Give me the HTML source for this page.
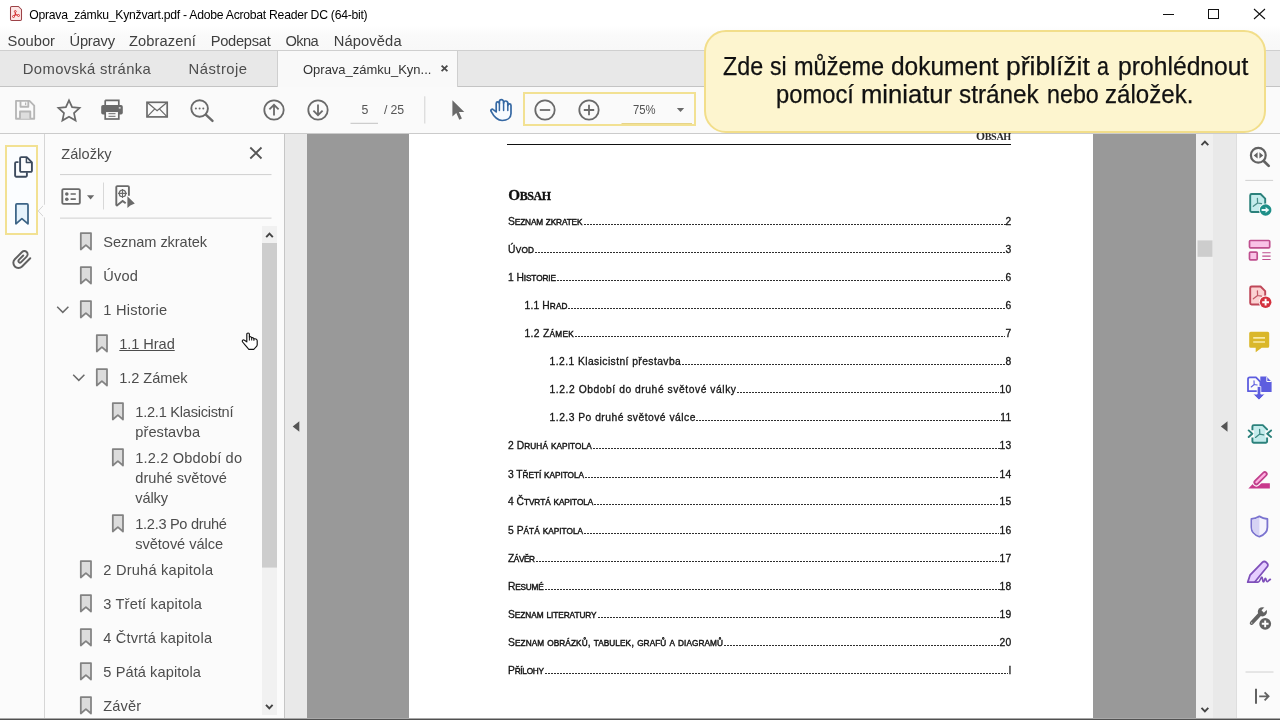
<!DOCTYPE html>
<html lang="cs">
<head>
<meta charset="utf-8">
<title>Oprava_zámku_Kynžvart.pdf - Adobe Acrobat Reader DC (64-bit)</title>
<style>
*{box-sizing:border-box;margin:0;padding:0}
html,body{width:1280px;height:720px;overflow:hidden;background:#fff}
body{font-family:"Liberation Sans",sans-serif;position:relative;color:#000}
#wrap{position:absolute;left:0;top:0;width:1280px;height:720px;will-change:transform}
.a{position:absolute}
.t{position:absolute;white-space:pre;line-height:1}
svg{position:absolute;overflow:visible}
#title{left:0;top:0;width:1280px;height:30px;background:#fff}
#menu{left:0;top:26px;width:1280px;height:24px;background:linear-gradient(#fff 0,#fafafa 40%,#f8f8f8 100%)}
#tabs{left:0;top:50px;width:1280px;height:37px;background:#e8e8e8;border-top:1px solid #cfcfcf;border-bottom:1px solid #c4c4c4}
#atab{left:277px;top:51px;width:181px;height:36px;background:#f9f9f9;border-left:1px solid #cfcfcf;border-right:1px solid #cfcfcf}
#tool{left:0;top:87px;width:1280px;height:47px;background:#fafafa;border-bottom:1px solid #cbcbcb}
#nav{left:0;top:134px;width:45px;height:586px;background:#fbfbfb;border-right:1px solid #d6d6d6}
#bm{left:45px;top:134px;width:239px;height:586px;background:#fbfbfb}
#split{left:284px;top:134px;width:23px;height:586px;background:#e9e9e9;border-left:1px solid #c6c6c6}
#doc{left:307px;top:134px;width:889px;height:586px;background:#999}
#page{left:409px;top:134px;width:684px;height:586px;background:#fff}
#vsb{left:1196px;top:134px;width:17px;height:586px;background:#f0f0f0}
#rsplit{left:1213px;top:134px;width:24px;height:586px;background:#e9e9e9}
#rtool{left:1236px;top:134px;width:44px;height:586px;background:#fbfbfb;border-left:1px solid #dedede}
#bottom{left:0;top:718px;width:1280px;height:2px;background:linear-gradient(#a8a8a8 0,#a8a8a8 50%,#505050 50%)}
#call{z-index:5;left:704px;top:30px;width:562px;height:103px;background:#fdf5cf;border:2px solid #f2de8a;border-radius:22px}
.hl{border:2px solid #f2e193}
.dots{position:absolute;height:1.3px;background-image:linear-gradient(to right,#2e2e2e 0,#2e2e2e 1.6px,transparent 1.6px);background-size:3px 1.3px;background-repeat:repeat-x}
</style>
</head>
<body>
<div id="wrap">
<div id="title" class="a"></div>
<div id="menu" class="a"></div>
<div id="tabs" class="a"></div>
<div id="atab" class="a"></div>
<div id="tool" class="a"></div>
<div id="nav" class="a"></div>
<div id="bm" class="a"></div>
<div id="split" class="a"></div>
<div id="doc" class="a"></div>
<div id="page" class="a"></div>
<div id="vsb" class="a"></div>
<div id="rsplit" class="a"></div>
<div id="rtool" class="a"></div>
<svg style="left:0;top:0" width="40" height="30" viewBox="0 0 40 30"><path d="M11.700 6.500h6.800l3 3v9.800a1.200 1.200 0 0 1-1.200 1.200H11.700a1.200 1.200 0 0 1-1.200-1.200V7.700a1.200 1.200 0 0 1 1.200-1.200z" fill="#fde6e6" stroke="#9c4247" stroke-width="1.050" stroke-linejoin="round"/><g fill="#fde6e6" stroke="#d63030" stroke-width=".95"><path d="M15.300 12.400l.2 2.200-1.500 1.400M15.500 14.600l2.200 .6" fill="none" stroke-width="1.300"/><circle cx="15.300" cy="11.500" r=".95"/><circle cx="13.500" cy="16.500" r="1"/><circle cx="18.500" cy="15.500" r="1"/></g></svg>
<span class="t" style="left:29.30px;top:9.27px;font-size:12.2px;color:#000;letter-spacing:-0.259px;">Oprava_zámku_Kynžvart.pdf - Adobe Acrobat Reader DC (64-bit)</span>
<div class="a" style="left:1163px;top:14px;width:11px;height:1px;background:#111"></div>
<div class="a" style="left:1208px;top:9px;width:11px;height:10px;border:1px solid #111"></div>
<svg style="left:1254px;top:9px" width="11" height="10" viewBox="0 0 11 10"><path d="M0 0L11 10M11 0L0 10" stroke="#111" stroke-width="1.1"/></svg>
<span class="t" style="left:7.60px;top:33.96px;font-size:14.7px;color:#3f3f3f;">Soubor</span>
<span class="t" style="left:69.50px;top:33.96px;font-size:14.7px;color:#3f3f3f;letter-spacing:-0.206px;">Úpravy</span>
<span class="t" style="left:129.00px;top:33.96px;font-size:14.7px;color:#3f3f3f;letter-spacing:0.082px;">Zobrazení</span>
<span class="t" style="left:210.70px;top:33.96px;font-size:14.7px;color:#3f3f3f;letter-spacing:-0.283px;">Podepsat</span>
<span class="t" style="left:285.40px;top:33.96px;font-size:14.7px;color:#3f3f3f;letter-spacing:-0.636px;">Okna</span>
<span class="t" style="left:333.70px;top:33.96px;font-size:14.7px;color:#3f3f3f;letter-spacing:0.133px;">Nápověda</span>
<span class="t" style="left:22.80px;top:61.77px;font-size:14.8px;color:#4d4d4d;letter-spacing:0.365px;">Domovská stránka</span>
<span class="t" style="left:188.60px;top:61.77px;font-size:14.8px;color:#4d4d4d;letter-spacing:0.470px;">Nástroje</span>
<span class="t" style="left:303.20px;top:63.29px;font-size:13.6px;color:#333;transform:scaleX(0.9546);transform-origin:0 0;">Oprava_zámku_Kyn...</span>
<svg style="left:441px;top:65.200px" width="7" height="7" viewBox="0 0 7 7"><path d="M.6 .6L6.400 6.200M6.400 .6L.6 6.200" stroke="#4a4a4a" stroke-width="1.800"/></svg>
<svg style="left:0;top:0" width="1280" height="720" viewBox="0 0 1280 720"><g fill="none" stroke="#b6b6b6" stroke-width="1.850" stroke-linejoin="round"><path d="M16 100.900h13.500l4.700 4.700v13.200h-18.200z"/><path d="M20.500 100.900v5.800h7.800v-5.800" /><path d="M20 118.800v-7.300h10.300v7.300" fill="#dedede"/><path d="M25.600 102.500v2.600" stroke-width="1.300"/></g><path d="M69 100.300l3.100 6.900 7.500 .8-5.600 5.100 1.600 7.400-6.600-3.800-6.600 3.800 1.600-7.400-5.600-5.100 7.500-.8z" fill="none" stroke="#6a6a6a" stroke-width="1.700" stroke-linejoin="miter"/><g><path d="M105.200 100.300h13.600v5" fill="none" stroke="#6a6a6a" stroke-width="1.700"/><path d="M105.200 105.500v-5.200" stroke="#6a6a6a" stroke-width="1.700"/><rect x="101.200" y="105" width="21.600" height="9.600" rx="1.800" fill="#6a6a6a"/><rect x="105.200" y="111.200" width="13.600" height="7.800" fill="#fafafa" stroke="#6a6a6a" stroke-width="1.700"/><path d="M108.500 113.700h7M108.500 116.300h7" stroke="#6a6a6a" stroke-width="1"/><rect x="118.800" y="107.300" width="1.800" height="1.200" fill="#fafafa"/></g><g fill="none" stroke="#6a6a6a" stroke-width="1.700"><rect x="147" y="102.300" width="20.200" height="14.600"/><path d="M147 102.300l10.100 8.400 10.100-8.400" stroke-width="1.300"/><path d="M147 116.900l7.800-8.100M167.200 116.900l-7.800-8.100" stroke-width="1.200"/></g><g><circle cx="199.600" cy="108.500" r="8.300" fill="none" stroke="#6a6a6a" stroke-width="1.900"/><path d="M205.800 114.600l6.700 6.300" stroke="#6a6a6a" stroke-width="2.400" stroke-linecap="round"/><circle cx="195.900" cy="108.500" r="1" fill="#6a6a6a"/><circle cx="199.600" cy="108.500" r="1" fill="#6a6a6a"/><circle cx="203.300" cy="108.500" r="1" fill="#6a6a6a"/></g><g fill="none" stroke="#6a6a6a" stroke-width="1.800"><circle cx="274" cy="110" r="9.700"/><path d="M274 115.600v-10.600M269.400 109.400l4.600-4.600 4.600 4.600"/></g><g fill="none" stroke="#6a6a6a" stroke-width="1.800"><circle cx="318" cy="110" r="9.700"/><path d="M318 104.400v10.600M313.400 110.600l4.600 4.600 4.600-4.600"/></g><path d="M350.500 123.300h27.500" stroke="#c2c2c2" stroke-width="1"/><path d="M424.800 96.300v27.200" stroke="#d2d2d2" stroke-width="1"/><path d="M452.400 100.200v16.400l3.900-3.500 3 6.600 2.600-1.200-3-6.500h5.400z" fill="#6a6a6a"/><g fill="#f7fbff" stroke="#3568a3" stroke-width="1.700" stroke-linejoin="round" stroke-linecap="round"><path d="M496.200 111.900V103.500a1.600 1.600 0 0 1 3.200 0V101.800a2.100 2.100 0 0 1 4.200 0V103.100a2.100 2.100 0 0 1 4.200 0V105.500a1.600 1.600 0 0 1 3.200 0V113.500c0 4.500-3.800 7-8.800 7C497 120.500 494 117 491 111.200a1.400 1.400 0 0 1 2.200-1.600z"/><path d="M499.400 103.500V110.500M503.600 101.800V110.500M507.800 103.100V110.500" fill="none" stroke-width="1.500"/></g><g fill="none" stroke="#6a6a6a" stroke-width="1.800"><circle cx="545" cy="110" r="9.700"/><path d="M539.800 110h10.400"/><circle cx="589" cy="110" r="9.700"/><path d="M583.800 110h10.400M589 104.800v10.400"/></g><path d="M621.500 123.500h70.500" stroke="#e6d48a" stroke-width="1"/><path d="M676.800 107.900h7.400l-3.700 4z" fill="#6a6a6a"/></svg>
<div class="a hl" style="left:523px;top:92px;width:173px;height:34px"></div>
<span class="t" style="left:361.50px;top:104.39px;font-size:12.3px;color:#555;">5</span>
<span class="t" style="left:384.00px;top:104.39px;font-size:12.3px;color:#555;letter-spacing:-0.172px;">/ 25</span>
<span class="t" style="left:633.00px;top:104.39px;font-size:12.3px;color:#555;transform:scaleX(0.9178);transform-origin:0 0;">75%</span>
<div id="call" class="a"></div>
<span class="t" style="left:722.60px;top:53.88px;font-size:25.3px;color:#111;z-index:6;-webkit-text-stroke:.25px #111;transform:scaleX(0.9199);transform-origin:0 0;">Zde</span>
<span class="t" style="left:769.50px;top:53.88px;font-size:25.3px;color:#111;z-index:6;-webkit-text-stroke:.25px #111;transform:scaleX(0.9080);transform-origin:0 0;">si</span>
<span class="t" style="left:793.50px;top:53.88px;font-size:25.3px;color:#111;z-index:6;-webkit-text-stroke:.25px #111;transform:scaleX(0.9297);transform-origin:0 0;">můžeme</span>
<span class="t" style="left:891.10px;top:53.88px;font-size:25.3px;color:#111;z-index:6;-webkit-text-stroke:.25px #111;transform:scaleX(0.9684);transform-origin:0 0;">dokument</span>
<span class="t" style="left:1006.10px;top:53.88px;font-size:25.3px;color:#111;z-index:6;-webkit-text-stroke:.25px #111;transform:scaleX(1.0457);transform-origin:0 0;">přiblížit</span>
<span class="t" style="left:1097.30px;top:53.88px;font-size:25.3px;color:#111;z-index:6;-webkit-text-stroke:.25px #111;transform:scaleX(0.8453);transform-origin:0 0;">a</span>
<span class="t" style="left:1117.60px;top:53.88px;font-size:25.3px;color:#111;z-index:6;-webkit-text-stroke:.25px #111;transform:scaleX(0.9759);transform-origin:0 0;">prohlédnout</span>
<span class="t" style="left:775.70px;top:81.98px;font-size:25.3px;color:#111;z-index:6;-webkit-text-stroke:.25px #111;transform:scaleX(0.9389);transform-origin:0 0;">pomocí</span>
<span class="t" style="left:860.70px;top:81.98px;font-size:25.3px;color:#111;z-index:6;-webkit-text-stroke:.25px #111;transform:scaleX(1.0124);transform-origin:0 0;">miniatur</span>
<span class="t" style="left:959.20px;top:81.98px;font-size:25.3px;color:#111;z-index:6;-webkit-text-stroke:.25px #111;transform:scaleX(0.9618);transform-origin:0 0;">stránek</span>
<span class="t" style="left:1046.50px;top:81.98px;font-size:25.3px;color:#111;z-index:6;-webkit-text-stroke:.25px #111;transform:scaleX(0.9204);transform-origin:0 0;">nebo</span>
<span class="t" style="left:1105.20px;top:81.98px;font-size:25.3px;color:#111;z-index:6;-webkit-text-stroke:.25px #111;transform:scaleX(0.9525);transform-origin:0 0;">záložek.</span>
<div id="bottom" class="a"></div>
<div class="a hl" style="left:5px;top:145px;width:33px;height:90px;background:#fbfdff"></div>
<svg style="left:0;top:0" width="1280" height="720" viewBox="0 0 1280 720"><path d="M45.500 204v14l-1 0z" fill="#fbfbfb"/><path d="M44.500 204.300l-6.300 6.700 6.300 6.700" fill="#fbfbfb" stroke="#d6d6d6" stroke-width="1"/><path d="M44 204.800v12.400" stroke="#fbfbfb" stroke-width="2"/><g fill="none" stroke="#3d4b5e" stroke-width="1.900" stroke-linejoin="round"><path d="M17.800 162.100H16.300a1.200 1.200 0 0 0-1.200 1.200V175.500a1.200 1.200 0 0 0 1.200 1.200H25.700a1.200 1.200 0 0 0 1.200-1.200V173" stroke-linecap="round"/><path d="M21.300 157.100H26.700L31.900 162.300V170.700a1.200 1.200 0 0 1-1.200 1.200H21.300a1.200 1.200 0 0 1-1.200-1.200V158.300a1.200 1.200 0 0 1 1.200-1.200z" fill="#fdfdfd"/><path d="M26.400 157.500V162.600H31.600" stroke-width="1.500"/></g><path d="M16.900 203.900h10.100a1 1 0 0 1 1 1v18.900l-6.100-5.200-6 5.200v-18.900a1 1 0 0 1 1-1z" fill="#e6f3fc" stroke="#3c6486" stroke-width="1.750" stroke-linejoin="round"/><path transform="translate(21.900 259.800) rotate(-45)" d="M7 4.800H-4.600A5.100 5.100 0 0 1-4.600-5.400H5.600A3.250 3.250 0 0 1 5.600 1.100H-2.200A1.600 1.600 0 0 1-2.200-2.100H4" fill="none" stroke="#606060" stroke-width="1.950" stroke-linecap="round"/></svg>
<span class="t" style="left:61.30px;top:147.24px;font-size:14.6px;color:#4d4d4d;">Záložky</span>
<span class="t" style="left:103.30px;top:235.44px;font-size:14.6px;color:#4d4d4d;letter-spacing:-0.072px;">Seznam zkratek</span>
<span class="t" style="left:103.30px;top:269.44px;font-size:14.6px;color:#4d4d4d;letter-spacing:0.207px;">Úvod</span>
<span class="t" style="left:103.30px;top:303.44px;font-size:14.6px;color:#4d4d4d;letter-spacing:0.229px;">1 Historie</span>
<span class="t" style="left:119.30px;top:337.44px;font-size:14.6px;color:#4d4d4d;letter-spacing:-0.069px;text-decoration:underline;text-underline-offset:1px;">1.1 Hrad</span>
<span class="t" style="left:119.30px;top:371.44px;font-size:14.6px;color:#4d4d4d;letter-spacing:-0.082px;">1.2 Zámek</span>
<span class="t" style="left:135.30px;top:405.44px;font-size:14.6px;color:#4d4d4d;letter-spacing:-0.251px;">1.2.1 Klasicistní</span>
<span class="t" style="left:135.30px;top:425.44px;font-size:14.6px;color:#4d4d4d;letter-spacing:0.076px;">přestavba</span>
<span class="t" style="left:135.30px;top:451.44px;font-size:14.6px;color:#4d4d4d;letter-spacing:0.145px;">1.2.2 Období do</span>
<span class="t" style="left:135.30px;top:471.44px;font-size:14.6px;color:#4d4d4d;">druhé světové</span>
<span class="t" style="left:135.30px;top:491.44px;font-size:14.6px;color:#4d4d4d;letter-spacing:-0.138px;">války</span>
<span class="t" style="left:135.30px;top:517.44px;font-size:14.6px;color:#4d4d4d;letter-spacing:-0.312px;">1.2.3 Po druhé</span>
<span class="t" style="left:135.30px;top:537.44px;font-size:14.6px;color:#4d4d4d;letter-spacing:-0.060px;">světové válce</span>
<span class="t" style="left:103.30px;top:563.44px;font-size:14.6px;color:#4d4d4d;letter-spacing:0.228px;">2 Druhá kapitola</span>
<span class="t" style="left:103.30px;top:597.44px;font-size:14.6px;color:#4d4d4d;letter-spacing:0.162px;">3 Třetí kapitola</span>
<span class="t" style="left:103.30px;top:631.44px;font-size:14.6px;color:#4d4d4d;letter-spacing:0.203px;">4 Čtvrtá kapitola</span>
<span class="t" style="left:103.30px;top:665.44px;font-size:14.6px;color:#4d4d4d;letter-spacing:0.081px;">5 Pátá kapitola</span>
<span class="t" style="left:103.30px;top:699.44px;font-size:14.6px;color:#4d4d4d;letter-spacing:0.097px;">Závěr</span>
<svg style="left:0;top:0" width="1280" height="720" viewBox="0 0 1280 720"><path d="M250.300 147.500l11.200 11M261.500 147.500l-11.200 11" stroke="#555" stroke-width="1.800"/><path d="M60 174.600h211.500M60 218.100h211.500" stroke="#cfcfcf" stroke-width="1"/><g><rect x="62.300" y="189.100" width="17.500" height="14.800" rx="1.200" fill="none" stroke="#6a6a6a" stroke-width="1.900"/><circle cx="66.800" cy="194" r="1.800" fill="#6a6a6a"/><circle cx="66.800" cy="199.200" r="1.800" fill="#6a6a6a"/><path d="M70.600 194h5.200M70.600 199.200h5.200" stroke="#6a6a6a" stroke-width="1.700"/><path d="M87 195.200h7.200l-3.600 4.200z" fill="#6a6a6a"/></g><path d="M103.500 182.500v27" stroke="#d8d8d8" stroke-width="1"/><g><path d="M116.300 205.600V187.100a1 1 0 0 1 1-1H127.900a1 1 0 0 1 1 1V195.800" fill="none" stroke="#6a6a6a" stroke-width="1.900"/><path d="M116.300 205.900l6.300-5 3.100 2.400" fill="none" stroke="#6a6a6a" stroke-width="1.900" stroke-linejoin="miter"/><circle cx="122.500" cy="193.400" r="3.200" fill="none" stroke="#6a6a6a" stroke-width="1.300"/><path d="M122.500 188.900v9M118 193.400h9" stroke="#6a6a6a" stroke-width="1.100"/><path d="M127.400 196.300v11.700l2.900-2.600 4.500-1.900z" fill="#6a6a6a"/></g><rect x="262" y="226" width="15" height="489" fill="#f1f1f1"/><rect x="262" y="243" width="15" height="324.600" fill="#cdcdcd"/><path d="M266.200 237.200l3.300-3.600 3.300 3.600" fill="none" stroke="#444" stroke-width="1.900"/><path d="M266 704.800l3.300 3.600 3.300-3.600" fill="none" stroke="#444" stroke-width="1.900"/><path d="M80.8 233.1h10.200v16.400l-5.100-4.300-5.100 4.300z" fill="#dcdcdc" stroke="#828282" stroke-width="1.750" stroke-linejoin="round"/><path d="M80.8 267.1h10.200v16.400l-5.100-4.300-5.100 4.300z" fill="#dcdcdc" stroke="#828282" stroke-width="1.750" stroke-linejoin="round"/><path d="M80.8 301.1h10.200v16.400l-5.100-4.300-5.100 4.300z" fill="#dcdcdc" stroke="#828282" stroke-width="1.750" stroke-linejoin="round"/><path d="M57.2 306.8l5.600 5.600 5.600-5.600" fill="none" stroke="#6a6a6a" stroke-width="1.500"/><path d="M96.8 335.1h10.200v16.400l-5.100-4.300-5.100 4.300z" fill="#dcdcdc" stroke="#828282" stroke-width="1.750" stroke-linejoin="round"/><path d="M96.8 369.1h10.200v16.400l-5.100-4.300-5.100 4.300z" fill="#dcdcdc" stroke="#828282" stroke-width="1.750" stroke-linejoin="round"/><path d="M73.2 374.8l5.600 5.600 5.600-5.600" fill="none" stroke="#6a6a6a" stroke-width="1.500"/><path d="M112.8 403.1h10.200v16.400l-5.100-4.300-5.100 4.300z" fill="#dcdcdc" stroke="#828282" stroke-width="1.750" stroke-linejoin="round"/><path d="M112.8 449.1h10.200v16.400l-5.100-4.300-5.100 4.300z" fill="#dcdcdc" stroke="#828282" stroke-width="1.750" stroke-linejoin="round"/><path d="M112.8 515.1h10.200v16.400l-5.100-4.300-5.100 4.300z" fill="#dcdcdc" stroke="#828282" stroke-width="1.750" stroke-linejoin="round"/><path d="M80.8 561.1h10.200v16.400l-5.100-4.300-5.100 4.300z" fill="#dcdcdc" stroke="#828282" stroke-width="1.750" stroke-linejoin="round"/><path d="M80.8 595.1h10.200v16.400l-5.100-4.300-5.100 4.300z" fill="#dcdcdc" stroke="#828282" stroke-width="1.750" stroke-linejoin="round"/><path d="M80.8 629.1h10.200v16.400l-5.100-4.300-5.100 4.300z" fill="#dcdcdc" stroke="#828282" stroke-width="1.750" stroke-linejoin="round"/><path d="M80.8 663.1h10.200v16.400l-5.100-4.300-5.100 4.300z" fill="#dcdcdc" stroke="#828282" stroke-width="1.750" stroke-linejoin="round"/><path d="M80.8 697.1h10.200v16.400l-5.100-4.300-5.100 4.300z" fill="#dcdcdc" stroke="#828282" stroke-width="1.750" stroke-linejoin="round"/><g fill="#fff" stroke="#111" stroke-width="1.150" stroke-linejoin="round" stroke-linecap="round"><path d="M246.800 341.900V334.300a1.300 1.300 0 0 1 2.600 0V336.900c.5-.4 1.900-.3 2.300 .9c.6-.4 1.800-.2 2.200 1.100c1.100-.4 3.300 .1 3.300 1.900V345c0 1.700-2.300 2.400-3.300 4.300H248.700c-1.400-2.300-4.700-5.400-6.100-7.300c-.9-1.400 .6-2.900 1.900-1.800z"/><path d="M249.400 336.900V340.200M251.700 337.900V340.100M253.900 339V340.400" fill="none" stroke-width="1"/></g></svg>
<div class="a" style="left:507px;top:144px;width:504px;height:1px;background:#111"></div>
<span class="t" style="left:976.00px;top:130.89px;font-size:11.6px;color:#2a2a2a;font-family:'Liberation Serif',serif;font-weight:bold;letter-spacing:-0.370px;">O<span style="font-size:10.2px">BSAH</span></span>
<span class="t" style="left:508.30px;top:187.07px;font-size:15.2px;color:#111;font-family:'Liberation Serif',serif;font-weight:bold;letter-spacing:-0.454px;-webkit-text-stroke:.3px #111;">O<span style="font-size:12.01px">BSAH</span></span>
<span class="t" style="left:508.00px;top:216.78px;font-size:10.3px;color:#151515;letter-spacing:-0.112px;-webkit-text-stroke:.3px #151515;">S<span style="font-size:8.24px;-webkit-text-stroke-width:.42px">EZNAM</span> <span style="font-size:8.24px;-webkit-text-stroke-width:.42px">ZKRATEK</span></span>
<span class="t" style="left:1005.44px;top:216.78px;font-size:10.3px;color:#151515;-webkit-text-stroke:.3px #151515;">2</span>
<div class="dots" style="left:584px;top:223.55px;width:421.6px"></div>
<span class="t" style="left:508.00px;top:244.78px;font-size:10.3px;color:#151515;letter-spacing:0.234px;-webkit-text-stroke:.3px #151515;">Ú<span style="font-size:8.24px;-webkit-text-stroke-width:.42px">VOD</span></span>
<span class="t" style="left:1005.44px;top:244.78px;font-size:10.3px;color:#151515;-webkit-text-stroke:.3px #151515;">3</span>
<div class="dots" style="left:535px;top:251.55px;width:470.1px"></div>
<span class="t" style="left:508.00px;top:272.78px;font-size:10.3px;color:#151515;letter-spacing:-0.092px;-webkit-text-stroke:.3px #151515;">1 H<span style="font-size:8.24px;-webkit-text-stroke-width:.42px">ISTORIE</span></span>
<span class="t" style="left:1005.44px;top:272.78px;font-size:10.3px;color:#151515;-webkit-text-stroke:.3px #151515;">6</span>
<div class="dots" style="left:557px;top:279.55px;width:448.1px"></div>
<span class="t" style="left:524.60px;top:300.78px;font-size:10.3px;color:#151515;letter-spacing:0.126px;-webkit-text-stroke:.3px #151515;">1.1 H<span style="font-size:8.24px;-webkit-text-stroke-width:.42px">RAD</span></span>
<span class="t" style="left:1005.44px;top:300.78px;font-size:10.3px;color:#151515;-webkit-text-stroke:.3px #151515;">6</span>
<div class="dots" style="left:568px;top:307.55px;width:436.6px"></div>
<span class="t" style="left:524.60px;top:328.78px;font-size:10.3px;color:#151515;letter-spacing:0.286px;-webkit-text-stroke:.3px #151515;">1.2 Z<span style="font-size:8.24px;-webkit-text-stroke-width:.42px">ÁMEK</span></span>
<span class="t" style="left:1005.44px;top:328.78px;font-size:10.3px;color:#151515;-webkit-text-stroke:.3px #151515;">7</span>
<div class="dots" style="left:575px;top:335.55px;width:430.4px"></div>
<span class="t" style="left:549.60px;top:356.78px;font-size:10.3px;color:#151515;letter-spacing:0.423px;-webkit-text-stroke:.3px #151515;">1.2.1 Klasicistní přestavba</span>
<span class="t" style="left:1005.44px;top:356.78px;font-size:10.3px;color:#151515;-webkit-text-stroke:.3px #151515;">8</span>
<div class="dots" style="left:682px;top:363.55px;width:323.3px"></div>
<span class="t" style="left:549.60px;top:384.78px;font-size:10.3px;color:#151515;letter-spacing:0.549px;-webkit-text-stroke:.3px #151515;">1.2.2 Období do druhé světové války</span>
<span class="t" style="left:999.47px;top:384.78px;font-size:10.3px;color:#151515;letter-spacing:0.259px;-webkit-text-stroke:.3px #151515;">10</span>
<div class="dots" style="left:737px;top:391.55px;width:262.2px"></div>
<span class="t" style="left:549.60px;top:412.78px;font-size:10.3px;color:#151515;letter-spacing:0.481px;-webkit-text-stroke:.3px #151515;">1.2.3 Po druhé světové válce</span>
<span class="t" style="left:1000.27px;top:412.78px;font-size:10.3px;color:#151515;letter-spacing:0.228px;-webkit-text-stroke:.3px #151515;">11</span>
<div class="dots" style="left:696px;top:419.55px;width:303.6px"></div>
<span class="t" style="left:508.00px;top:440.78px;font-size:10.3px;color:#151515;letter-spacing:0.088px;-webkit-text-stroke:.3px #151515;">2 D<span style="font-size:8.24px;-webkit-text-stroke-width:.42px">RUHÁ</span> <span style="font-size:8.24px;-webkit-text-stroke-width:.42px">KAPITOLA</span></span>
<span class="t" style="left:999.47px;top:440.78px;font-size:10.3px;color:#151515;letter-spacing:0.259px;-webkit-text-stroke:.3px #151515;">13</span>
<div class="dots" style="left:593px;top:447.55px;width:406.5px"></div>
<span class="t" style="left:508.00px;top:469.78px;font-size:10.3px;color:#151515;letter-spacing:-0.031px;-webkit-text-stroke:.3px #151515;">3 T<span style="font-size:8.24px;-webkit-text-stroke-width:.42px">ŘETÍ</span> <span style="font-size:8.24px;-webkit-text-stroke-width:.42px">KAPITOLA</span></span>
<span class="t" style="left:999.47px;top:469.78px;font-size:10.3px;color:#151515;letter-spacing:0.259px;-webkit-text-stroke:.3px #151515;">14</span>
<div class="dots" style="left:585px;top:476.55px;width:414.2px"></div>
<span class="t" style="left:508.00px;top:496.78px;font-size:10.3px;color:#151515;letter-spacing:-0.036px;-webkit-text-stroke:.3px #151515;">4 Č<span style="font-size:8.24px;-webkit-text-stroke-width:.42px">TVRTÁ</span> <span style="font-size:8.24px;-webkit-text-stroke-width:.42px">KAPITOLA</span></span>
<span class="t" style="left:999.47px;top:496.78px;font-size:10.3px;color:#151515;letter-spacing:0.259px;-webkit-text-stroke:.3px #151515;">15</span>
<div class="dots" style="left:594px;top:503.55px;width:404.9px"></div>
<span class="t" style="left:508.00px;top:525.78px;font-size:10.3px;color:#151515;letter-spacing:0.037px;-webkit-text-stroke:.3px #151515;">5 P<span style="font-size:8.24px;-webkit-text-stroke-width:.42px">ÁTÁ</span> <span style="font-size:8.24px;-webkit-text-stroke-width:.42px">KAPITOLA</span></span>
<span class="t" style="left:999.47px;top:525.78px;font-size:10.3px;color:#151515;letter-spacing:0.259px;-webkit-text-stroke:.3px #151515;">16</span>
<div class="dots" style="left:584px;top:532.55px;width:415.2px"></div>
<span class="t" style="left:508.00px;top:553.78px;font-size:10.3px;color:#151515;letter-spacing:-0.434px;-webkit-text-stroke:.3px #151515;">Z<span style="font-size:8.24px;-webkit-text-stroke-width:.42px">ÁVĚR</span></span>
<span class="t" style="left:999.47px;top:553.78px;font-size:10.3px;color:#151515;letter-spacing:0.259px;-webkit-text-stroke:.3px #151515;">17</span>
<div class="dots" style="left:536px;top:560.55px;width:463.2px"></div>
<span class="t" style="left:508.00px;top:581.78px;font-size:10.3px;color:#151515;letter-spacing:-0.207px;-webkit-text-stroke:.3px #151515;">R<span style="font-size:8.24px;-webkit-text-stroke-width:.42px">ESUMÉ</span></span>
<span class="t" style="left:999.47px;top:581.78px;font-size:10.3px;color:#151515;letter-spacing:0.259px;-webkit-text-stroke:.3px #151515;">18</span>
<div class="dots" style="left:545px;top:588.55px;width:454.5px"></div>
<span class="t" style="left:508.00px;top:609.78px;font-size:10.3px;color:#151515;letter-spacing:-0.029px;-webkit-text-stroke:.3px #151515;">S<span style="font-size:8.24px;-webkit-text-stroke-width:.42px">EZNAM</span> <span style="font-size:8.24px;-webkit-text-stroke-width:.42px">LITERATURY</span></span>
<span class="t" style="left:999.47px;top:609.78px;font-size:10.3px;color:#151515;letter-spacing:0.259px;-webkit-text-stroke:.3px #151515;">19</span>
<div class="dots" style="left:598px;top:616.55px;width:401.6px"></div>
<span class="t" style="left:508.00px;top:637.78px;font-size:10.3px;color:#151515;letter-spacing:0.094px;-webkit-text-stroke:.3px #151515;">S<span style="font-size:8.24px;-webkit-text-stroke-width:.42px">EZNAM</span> <span style="font-size:8.24px;-webkit-text-stroke-width:.42px">OBRÁZKŮ</span>, <span style="font-size:8.24px;-webkit-text-stroke-width:.42px">TABULEK</span>, <span style="font-size:8.24px;-webkit-text-stroke-width:.42px">GRAFŮ</span> <span style="font-size:8.24px;-webkit-text-stroke-width:.42px">A</span> <span style="font-size:8.24px;-webkit-text-stroke-width:.42px">DIAGRAMŮ</span></span>
<span class="t" style="left:999.47px;top:637.78px;font-size:10.3px;color:#151515;letter-spacing:0.259px;-webkit-text-stroke:.3px #151515;">20</span>
<div class="dots" style="left:724px;top:644.55px;width:275.2px"></div>
<span class="t" style="left:508.00px;top:665.78px;font-size:10.3px;color:#151515;letter-spacing:-0.258px;-webkit-text-stroke:.3px #151515;">P<span style="font-size:8.24px;-webkit-text-stroke-width:.42px">ŘÍLOHY</span></span>
<span class="t" style="left:1008.41px;top:665.78px;font-size:10.3px;color:#151515;-webkit-text-stroke:.3px #151515;">I</span>
<div class="dots" style="left:545px;top:672.55px;width:463.1px"></div>
<svg style="left:0;top:0" width="1280" height="720" viewBox="0 0 1280 720"><rect x="1197.500" y="240.400" width="15" height="16.400" fill="#cdcdcd"/><path d="M1201.500 145.200l3.400-3.600 3.400 3.600" fill="none" stroke="#444" stroke-width="1.900"/><path d="M1201.500 707.800l3.400 3.600 3.400-3.600" fill="none" stroke="#444" stroke-width="1.900"/><path d="M299.300 421.300v10.400l-6.600-5.200z" fill="#555"/><path d="M1227.500 421.300v10.400l-6.600-5.200z" fill="#555"/></svg>
<svg style="left:0;top:0" width="1280" height="720" viewBox="0 0 1280 720"><g><circle cx="1258.300" cy="155.300" r="7.400" fill="none" stroke="#626262" stroke-width="2.200"/><path d="M1264 161.300l4.700 4.600" stroke="#626262" stroke-width="2.700" stroke-linecap="round"/><path d="M1257.600 152.200v6.400l-3.900-3.200zM1259.400 152.200v6.400l3.800-3.200z" fill="#626262"/></g><path d="M1245.300 180.400h27.800M1245.500 672h28" stroke="#d0d0d0" stroke-width="1"/><path d="M1251.6 194.0H1260.6L1265.2 198.6V210.6a1.4 1.4 0 0 1-1.4 1.4H1251.6a1.4 1.4 0 0 1-1.4-1.4V195.4a1.4 1.4 0 0 1 1.4-1.4z" fill="#c4ecec" stroke="#2b817b" stroke-width="1.900" stroke-linejoin="round"/><path d="M1257.4 198.3L1257.6 203.0L1253.3 206.3M1257.6 203.0L1261.5 203.7" fill="none" stroke="#4a8d88" stroke-width="1.250" stroke-linecap="round" stroke-linejoin="round"/><circle cx="1265.600" cy="210" r="6.600" fill="#fbfbfb"/><circle cx="1265.600" cy="210" r="5.800" fill="#1e8f88"/><path d="M1261.600 210h5.500" stroke="#eafafa" stroke-width="2"/><path d="M1265.600 206.900l3.700 3.100-3.700 3.100z" fill="#eafafa"/><g fill="#f9c2e6" stroke="#bf4f8f" stroke-width="1.700" stroke-linejoin="round"><rect x="1249.500" y="240.500" width="20.200" height="7.300" rx="1"/><rect x="1249.500" y="252.100" width="7.700" height="7.700" rx="1"/></g><path d="M1262.300 252.700h8.300M1262.300 256.100h8.300M1262.300 259.500h8.300" stroke="#bf4f8f" stroke-width="1.150"/><path d="M1251.6 286.5H1260.6L1265.2 291.1V303.1a1.4 1.4 0 0 1-1.4 1.4H1251.6a1.4 1.4 0 0 1-1.4-1.4V287.9a1.4 1.4 0 0 1 1.4-1.4z" fill="#fbd2d2" stroke="#bf4758" stroke-width="1.900" stroke-linejoin="round"/><path d="M1257.4 290.8L1257.6 295.5L1253.3 298.8M1257.6 295.5L1261.5 296.2" fill="none" stroke="#c25a66" stroke-width="1.250" stroke-linecap="round" stroke-linejoin="round"/><circle cx="1265.600" cy="302.200" r="6.600" fill="#fbfbfb"/><circle cx="1265.600" cy="302.200" r="5.800" fill="#d4323f"/><path d="M1262.200 302.200h6.800M1265.600 298.800v6.800" stroke="#fff" stroke-width="1.900"/><path d="M1250.700 331.800h17.000a1.500 1.500 0 0 1 1.500 1.500v13a1.500 1.500 0 0 1-1.500 1.500h-6l-6 4.400v-4.400h-5a1.500 1.500 0 0 1-1.500-1.500v-13a1.500 1.500 0 0 1 1.500-1.500z" fill="#dab72a"/><path d="M1253.200 337.800h11.800M1253.200 342h11.800" stroke="#f9eaa6" stroke-width="1.700"/><path d="M1260.300 376.600h6.200l5.100 5.100v10.300h-11.300z" fill="#5d5ddf"/><path d="M1266.800 376.800v4.700h4.700" fill="none" stroke="#fbfbfb" stroke-width="1"/><path d="M1249.800 377.400h6.200l4.400 4.400v9.400h-12.400v-12a1.800 1.800 0 0 1 1.800-1.800z" fill="#fbfbfb" stroke="#5d5ddf" stroke-width="1.800" stroke-linejoin="round"/><path d="M1254 380.800l.2 3.700-3 2.500M1254.200 384.500l3 .5" fill="none" stroke="#5d5ddf" stroke-width="1.100" stroke-linecap="round" stroke-linejoin="round"/><path d="M1257.200 386.500h3.600v7.600h4.200l-6 6-6-6h4.200z" fill="#5d5ddf" stroke="#fbfbfb" stroke-width=".8"/><path d="M1253.8 425.1H1262.8L1267.1 429.4V441.3a1.4 1.4 0 0 1-1.4 1.4H1253.8a1.4 1.4 0 0 1-1.4-1.4V426.5a1.4 1.4 0 0 1 1.4-1.4z" fill="#c4ecec" stroke="#2b817b" stroke-width="1.900" stroke-linejoin="round"/><path d="M1259.6 429.4L1259.8 434.1L1255.5 437.4M1259.8 434.1L1263.7 434.8" fill="none" stroke="#3f8a84" stroke-width="1.250" stroke-linecap="round" stroke-linejoin="round"/><path d="M1252.400 430.200v7.200M1267.100 430.200v7.200" stroke="#fbfbfb" stroke-width="3.400"/><path d="M1248.700 430.400l3.600 3.300-3.600 3.300M1271.100 430.400l-3.900 3.300 3.900 3.300" fill="none" stroke="#2b817b" stroke-width="1.900" stroke-linecap="round" stroke-linejoin="round"/><path d="M1248.300 488.500l5.200-5.200h16.400v5.200z" fill="#c8388c"/><path d="M1256.400 482.300l8.300-8.200" stroke="#fbfbfb" stroke-width="8.200" stroke-linecap="round"/><path d="M1256.300 482.400l8.500-8.400" stroke="#c0408c" stroke-width="5.700" stroke-linecap="round"/><path d="M1256.400 482.300l8.300-8.200" stroke="#ffaee0" stroke-width="2.300" stroke-linecap="round"/><path d="M1259.400 516.400c2.600 1.500 5.200 2.300 8 2.600v8.200c0 4.600-3.400 7.700-8 9.400c-4.600-1.700-8-4.800-8-9.400v-8.200c2.800-.3 5.400-1.100 8-2.600z" fill="#f4f3fd" stroke="#7a73cf" stroke-width="1.800" stroke-linejoin="round"/><path d="M1259.400 517.400c-2.300 1.300-4.700 2-7.200 2.300v7.500c0 4.200 3.100 7 7.200 8.500z" fill="#d6d3f4"/><path d="M1247.700 582.200l2.300-7 12.600-13a2.400 2.400 0 0 1 3.400 0l1.200 1.200a2.400 2.400 0 0 1 0 3.400l-12.600 15.400z" fill="#e6ceff" stroke="#7f50ba" stroke-width="1.800" stroke-linejoin="round"/><path d="M1254.600 582.200h3.500c1.800 0 2.600-5 3.700-5s.5 4.700 1.600 4.700s1.100-3.500 2-3.500s.6 3.300 1.700 3.300s1.600-1.600 3.200-2.300" fill="none" stroke="#7f50ba" stroke-width="1.700" stroke-linecap="round" stroke-linejoin="round"/><path d="M1251.700 623l9.200-9.800" stroke="#626262" stroke-width="3.900" stroke-linecap="round"/><circle cx="1262.400" cy="611.800" r="4.600" fill="#626262"/><path d="M1262.700 611.500l5.500-5.500" stroke="#fbfbfb" stroke-width="3.400"/><circle cx="1251.700" cy="623" r=".75" fill="#c9c9c9"/><circle cx="1265.200" cy="623.800" r="6.800" fill="#fbfbfb"/><circle cx="1265.200" cy="623.800" r="5.900" fill="#626262"/><path d="M1261.800 623.800h6.800M1265.200 620.400v6.800" stroke="#fff" stroke-width="1.900"/><path d="M1256 688.800v15" stroke="#626262" stroke-width="2"/><path d="M1259.200 696.300h9.300M1264.600 692.300l4 4-4 4" fill="none" stroke="#626262" stroke-width="1.800"/></svg>
</div>
</body>
</html>
